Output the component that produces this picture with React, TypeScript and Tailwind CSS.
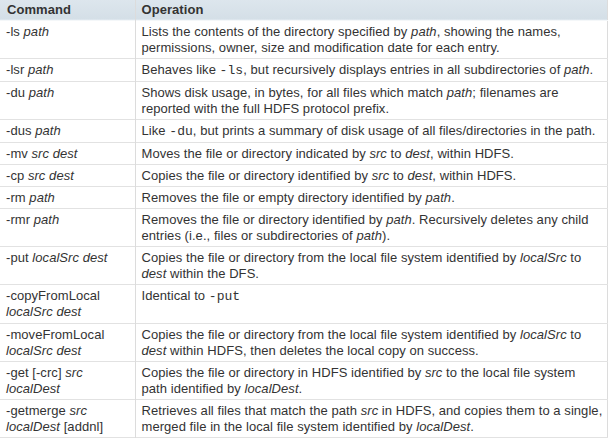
import React from "react";

const I = ({ children }: { children: React.ReactNode }) => <i>{children}</i>;
const M = ({ children }: { children: React.ReactNode }) => (
  <span style={{ fontFamily: '"Liberation Mono", monospace' }}>{children}</span>
);

type Row = { cmd: React.ReactNode; op: React.ReactNode };

const rows: Row[] = [
  {
    cmd: <>-ls <I>path</I></>,
    op: (
      <>
        Lists the contents of the directory specified by <I>path</I>, showing the names,
        <br />
        permissions, owner, size and modification date for each entry.
      </>
    ),
  },
  {
    cmd: <>-lsr <I>path</I></>,
    op: (
      <>
        Behaves like <M>-ls</M>, but recursively displays entries in all subdirectories of <I>path</I>.
      </>
    ),
  },
  {
    cmd: <>-du <I>path</I></>,
    op: (
      <>
        Shows disk usage, in bytes, for all files which match <I>path</I>; filenames are
        <br />
        reported with the full HDFS protocol prefix.
      </>
    ),
  },
  {
    cmd: <>-dus <I>path</I></>,
    op: (
      <>
        Like <M>-du</M>, but prints a summary of disk usage of all files/directories in the path.
      </>
    ),
  },
  {
    cmd: <>-mv <I>src dest</I></>,
    op: (
      <>
        Moves the file or directory indicated by <I>src</I> to <I>dest</I>, within HDFS.
      </>
    ),
  },
  {
    cmd: <>-cp <I>src dest</I></>,
    op: (
      <>
        Copies the file or directory identified by <I>src</I> to <I>dest</I>, within HDFS.
      </>
    ),
  },
  {
    cmd: <>-rm <I>path</I></>,
    op: (
      <>
        Removes the file or empty directory identified by <I>path</I>.
      </>
    ),
  },
  {
    cmd: <>-rmr <I>path</I></>,
    op: (
      <>
        Removes the file or directory identified by <I>path</I>. Recursively deletes any child
        <br />
        entries (i.e., files or subdirectories of <I>path</I>).
      </>
    ),
  },
  {
    cmd: <>-put <I>localSrc dest</I></>,
    op: (
      <>
        Copies the file or directory from the local file system identified by <I>localSrc</I> to
        <br />
        <I>dest</I> within the DFS.
      </>
    ),
  },
  {
    cmd: (
      <>
        -copyFromLocal
        <br />
        <I>localSrc dest</I>
      </>
    ),
    op: (
      <>
        Identical to <M>-put</M>
        <br />
        &nbsp;
      </>
    ),
  },
  {
    cmd: (
      <>
        -moveFromLocal
        <br />
        <I>localSrc dest</I>
      </>
    ),
    op: (
      <>
        Copies the file or directory from the local file system identified by <I>localSrc</I> to
        <br />
        <I>dest</I> within HDFS, then deletes the local copy on success.
      </>
    ),
  },
  {
    cmd: (
      <>
        -get [-crc] <I>src</I>
        <br />
        <I>localDest</I>
      </>
    ),
    op: (
      <>
        Copies the file or directory in HDFS identified by <I>src</I> to the local file system
        <br />
        path identified by <I>localDest</I>.
      </>
    ),
  },
  {
    cmd: (
      <>
        -getmerge <I>src</I>
        <br />
        <I>localDest</I> [addnl]
      </>
    ),
    op: (
      <>
        Retrieves all files that match the path <I>src</I> in HDFS, and copies them to a single,
        <br />
        merged file in the local file system identified by <I>localDest</I>.
      </>
    ),
  },
];

export default function App() {
  return (
    <div
      className="w-[610px] h-[438px] overflow-hidden bg-white text-[#333] text-[13px] leading-[16px] tracking-[0.06px]"
      style={{ fontFamily: '"Liberation Sans", Arial, sans-serif' }}
    >
      <table className="w-[608px] border-collapse border-r border-[#dcdcdc]">
        <thead>
          <tr className="bg-gradient-to-b from-[#dde6ed] to-[#d4dfe7] border-b border-[#f4f7f9]">
            <th className="w-[135px] text-left font-bold pl-[7px] pt-[2px] pb-[1px] border-r border-[#dcdcdc] h-[20px]">
              Command
            </th>
            <th className="text-left font-bold pl-[6px] pt-[2px] pb-[1px] h-[20px]">Operation</th>
          </tr>
        </thead>
        <tbody>
          {rows.map((r, i) => (
            <tr key={i} className="border-b border-[#e2e2e2] align-top">
              <td className="w-[135px] pl-[6px] pt-[3px] pb-[2px] border-r border-[#dcdcdc] whitespace-nowrap">
                {r.cmd}
              </td>
              <td className="pl-[6px] pt-[3px] pb-[2px] whitespace-nowrap">{r.op}</td>
            </tr>
          ))}
        </tbody>
      </table>
    </div>
  );
}
